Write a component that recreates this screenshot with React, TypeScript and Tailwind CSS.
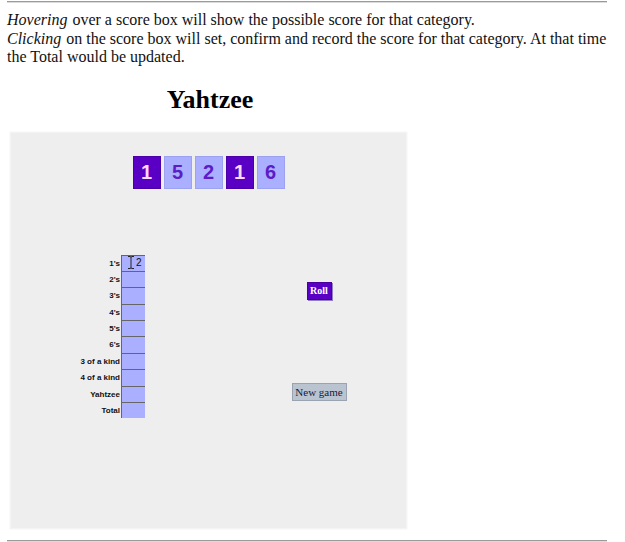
import React from "react";

const dice = [
  { v: 1, held: true },
  { v: 5, held: false },
  { v: 2, held: false },
  { v: 1, held: true },
  { v: 6, held: false },
];

const rows = ["1's", "2's", "3's", "4's", "5's", "6's", "3 of a kind", "4 of a kind", "Yahtzee", "Total"];

export default function App() {
  return (
    <div className="w-[625px] h-[542px] bg-white overflow-hidden" style={{ fontFamily: '"Liberation Serif", "Times New Roman", serif' }}>
      <div className="ml-[7px] w-[600px] pt-[1px]">
        <div className="h-[2px] border-t border-b border-t-[#9a9a9a] border-b-[#dcdcdc]" />
        <div className="mt-[8px] text-[16px] leading-[18.5px] text-[#111]">
          <div>
            <i className="pr-[1px]">Hovering</i> over a score box will show the possible score for that category.
          </div>
          <div>
            <i className="pr-[1px]">Clicking</i> on the score box will set, confirm and record the score for that category. At that time the Total would be updated.
          </div>
        </div>
        <div className="mt-[18px] w-[406px] text-center text-[26px] font-bold leading-[29px] text-black">Yahtzee</div>
        <div className="mt-[18px] ml-[3px] w-[397px] h-[397px] bg-[#eeeeee] border border-[#f4f4f4] shadow-[0_0_1px_#e0e0e0]">
          <div className="pt-[23px] flex justify-center gap-[3px]" style={{ fontFamily: '"Liberation Sans", Arial, sans-serif' }}>
            {dice.map((d, i) => (
              <div
                key={i}
                className={
                  d.held
                    ? "w-[28px] h-[33px] flex items-center justify-center bg-[#5a00c4] text-[#ffd8ff] text-[20px] font-bold border border-[#4a00a8]"
                    : "w-[28px] h-[33px] flex items-center justify-center bg-[#aab0ff] text-[#5c1cc6] text-[20px] font-bold border border-[#9ca2f0]"
                }
              >
                {d.v}
              </div>
            ))}
          </div>
          <div className="mt-[66px] flex">
            <div className="ml-[60px] flex flex-col" style={{ fontFamily: '"Liberation Sans", Arial, sans-serif' }}>
              {rows.map((r, i) => (
                <div key={r} className="flex h-[16.4px] items-stretch">
                  <div className="w-[50px] pr-[1px] text-right text-[8px] font-bold text-[#111] leading-[17px]">{r}</div>
                  <div className="relative w-[24px] bg-[#aab0ff] border-t border-l border-[#666]">
                    {i === 0 && (
                      <>
                        <svg className="absolute left-[5px] top-[0px]" width="8" height="13" viewBox="0 0 8 13">
                          <path d="M1 0.5 H3 Q4 0.5 4 1.5 V11.5 Q4 12.5 3 12.5 H1 M7 0.5 H5 Q4 0.5 4 1.5 M4 11.5 Q4 12.5 5 12.5 H7" stroke="#222" strokeWidth="1" fill="none" />
                        </svg>
                        <span className="absolute left-[14px] top-[0px] text-[10px] leading-[14px] text-[#111]">2</span>
                      </>
                    )}
                  </div>
                </div>
              ))}
            </div>
            <div className="ml-[146px] w-[56px] flex flex-col items-center">
              <button className="mt-[27px] w-[25px] h-[18px] bg-[#5a00c4] text-white text-[10px] font-bold leading-[16px] border border-[#4a00a0] shadow-[1px_1px_0_#9080c0]" style={{ fontFamily: '"Liberation Serif", serif' }}>
                Roll
              </button>
              <button className="mt-[83px] w-[55px] h-[18px] bg-[#b9c4d0] text-[#1a1a3a] text-[11px] leading-[16px] border border-[#9aa4b0]" style={{ fontFamily: '"Liberation Serif", serif' }}>
                New game
              </button>
            </div>
          </div>
        </div>
        <div className="mt-[11px] h-[2px] border-t border-b border-t-[#9a9a9a] border-b-[#dcdcdc]" />
      </div>
    </div>
  );
}
